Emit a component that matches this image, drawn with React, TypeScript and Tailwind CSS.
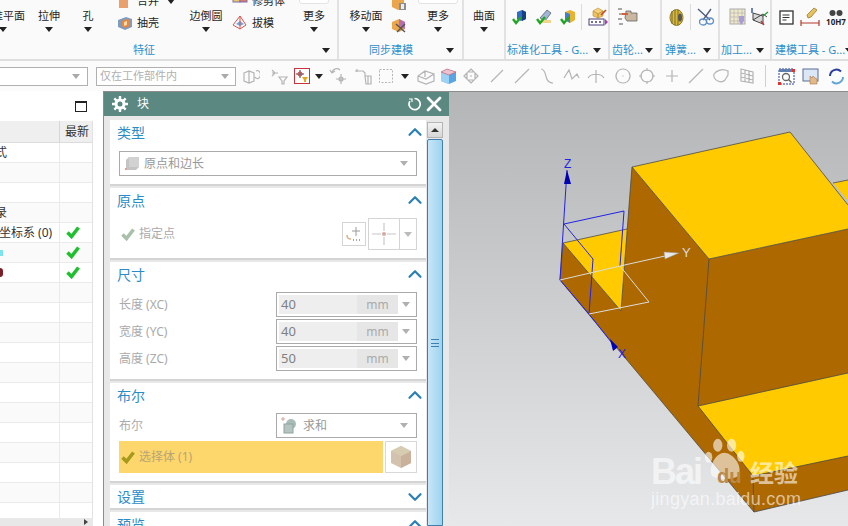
import type { ReactNode } from 'react';
import { ChevronDown, ChevronUp, X } from 'lucide-react';

const Arrow = ({ className = 'text-[#222]' }: { className?: string }) => (
  <svg width="8" height="5" viewBox="0 0 8 5" className={`shrink-0 ${className}`}>
    <path d="M0 0h8L4 5z" fill="currentColor" />
  </svg>
);

const Tick = ({ className }: { className: string }) => (
  <svg width="14" height="13" viewBox="0 0 14 13" fill="none" className={`shrink-0 ${className}`}>
    <path d="M1.5 6.5L5.5 10.5L12.5 1.5" stroke="currentColor" strokeWidth="3.6" />
  </svg>
);

// small colour icons, 16x16
const Ico = ({ children, size = 16, box = 16 }: { children: ReactNode; size?: number; box?: number }) => (
  <svg width={size} height={size} viewBox={`0 0 ${box} ${box}`} className="shrink-0">
    {children}
  </svg>
);

const Shell = () => (
  <Ico>
    <path d="M1 5l8-3 6 2v8l-7 3-7-3z" fill="#7f9bc0" />
    <path d="M5 6l5-2 3 1v6l-5 2-3-2z" fill="#e8873a" />
    <path d="M7 7l3-1v4l-3 1z" fill="#f6d9a8" />
  </Ico>
);
const Draft = () => (
  <Ico>
    <path d="M8 1l6 9-6 4-7-4z" fill="none" stroke="#d9534f" strokeWidth="1" />
    <path d="M4 9l4-3 4 3-4 2z" fill="#6fa8dc" />
    <path d="M8 1v13" stroke="#d9534f" />
  </Ico>
);
const Unite = () => (
  <Ico>
    <circle cx="6" cy="4" r="5" fill="#6aa9a0" stroke="#2f6f66" />
    <rect x="2" y="6" width="9" height="9" fill="#e9a06a" />
  </Ico>
);
const Trim = () => (
  <Ico>
    <rect x="1" y="0" width="7" height="9" fill="#e7c76a" stroke="#7d6fb0" />
    <rect x="8" y="0" width="7" height="9" fill="#d97a6a" stroke="#7d6fb0" />
  </Ico>
);
const SyncA = () => (
  <Ico>
    <path d="M1 4l6-3 6 3v8l-6 3-6-3z" fill="#eba54a" />
    <rect x="8" y="8" width="7" height="7" fill="#8d8d8d" />
    <path d="M10 9h3v5h-3z" fill="#ededed" />
  </Ico>
);
const SyncB = () => (
  <Ico>
    <path d="M1 5l7-3 6 3v7l-6 3-7-3z" fill="#eba54a" />
    <path d="M8 2l6 3v7l-6-3z" fill="#b56fb0" />
    <path d="M5 7l9 8M14 7l-8 8" stroke="#555" strokeWidth="1.4" />
  </Ico>
);
const StdA = ({ color = '#2d6fc4' }: { color?: string }) => (
  <Ico>
    <path d="M5 3l5-2 4 2v7l-5 2-4-2z" fill={color} />
    <path d="M10 1l4 2v7l-4 2z" fill="#173f86" />
    <path d="M1 10l3 4 5-6" fill="none" stroke="#25a525" strokeWidth="2.4" />
  </Ico>
);
const StdB = () => (
  <Ico>
    <path d="M4 9l7-8 4 3-6 8z" fill="#9fb7d8" stroke="#555" strokeWidth=".7" />
    <path d="M6 11h9v3H6z" fill="#f0d68a" />
    <path d="M1 10l3 4 5-6" fill="none" stroke="#25a525" strokeWidth="2.4" />
  </Ico>
);
const StdC = () => (
  <Ico>
    <path d="M5 3l5-2 5 2v8l-5 3-5-3z" fill="#e8b330" />
    <path d="M5 3l5 2v9l-5-3z" fill="#3d7fd0" />
    <path d="M1 10l3 4 5-6" fill="none" stroke="#25a525" strokeWidth="2.4" />
  </Ico>
);
const StdD = () => (
  <Ico size={20} box={20}>
    <path d="M5 4l5-3 5 3-5 3z" fill="#f3d27a" stroke="#b98a2a" strokeWidth=".6" />
    <path d="M5 4v5l5 2V7zM15 4v5l-5 2V7z" fill="#eec163" stroke="#b98a2a" strokeWidth=".6" />
    <rect x="1" y="12" width="15" height="6" fill="#fff" stroke="#4a3f7a" />
    <path d="M3 15h2M7 15h2M11 15h2" stroke="#4a3f7a" strokeWidth="1.5" />
    <path d="M17 12l3 3-3 3z" fill="#b03bb0" />
    <path d="M13 8l5-5" stroke="#c2452d" strokeWidth="1.6" />
  </Ico>
);
const Gear = () => (
  <Ico size={20} box={20}>
    <path d="M0 2h4M1 7h4M0 12h4M1 17h4" stroke="#555" strokeWidth="1" />
    <path d="M8 4h5v2h6v8H9l-2-3z" fill="#c9b7a0" stroke="#555" strokeWidth=".7" />
    <path d="M4 6h6v2H4z" fill="#d45f3b" />
  </Ico>
);
const Spring = () => (
  <svg width="15" height="17" viewBox="0 0 15 17" className="shrink-0">
    <ellipse cx="7.5" cy="8.5" rx="6.5" ry="8" fill="#d9b93a" stroke="#8a7a2a" />
    <path d="M3 2v13M6 1v15M9 1v15" stroke="#7b6a25" strokeWidth="1" />
    <ellipse cx="11" cy="8.5" rx="2" ry="4" fill="#555" />
  </svg>
);
const Scissor = () => (
  <Ico size={18} box={18}>
    <path d="M1 1l12 11M14 1L6 12" stroke="#4a5a78" strokeWidth="1.3" />
    <ellipse cx="13" cy="13" rx="3.5" ry="3" fill="none" stroke="#5f90c8" strokeWidth="1.3" />
    <ellipse cx="6" cy="14" rx="3.5" ry="3" fill="none" stroke="#5f90c8" strokeWidth="1.3" />
  </Ico>
);
const Table = () => (
  <Ico size={18} box={18}>
    <rect x="1" y="1" width="15" height="15" fill="#efe9c9" stroke="#a9a9a9" />
    <path d="M1 5h15M1 9h15M1 13h15M5 1v15M9 1v15M13 1v15" stroke="#b5b5b5" strokeWidth=".7" />
    <path d="M10 8h5v5l-3 4-2-4z" fill="#a99ad8" />
  </Ico>
);
const Datum = () => (
  <Ico size={20} box={20}>
    <path d="M4 6l10 3v8L4 13z" fill="#d8d8d8" stroke="#444" />
    <path d="M4 13l10-6 4 3" fill="none" stroke="#444" />
    <path d="M3 1v5" stroke="#2a4fb0" strokeWidth="1.4" />
    <path d="M14 9l5-4" stroke="#2a9a3a" strokeWidth="1.4" />
    <path d="M12 14l3 4" stroke="#c43a3a" strokeWidth="1.4" />
  </Ico>
);
const Note = () => (
  <Ico size={15} box={15}>
    <rect x="1" y="1" width="13" height="13" fill="#fff" stroke="#333" strokeWidth="1.3" />
    <path d="M3.5 5h7M3.5 7.5h7M3.5 10h4" stroke="#333" />
  </Ico>
);
const Brush = () => (
  <Ico size={20} box={20}>
    <path d="M7 8l7-7 3 2-6 7-3 1z" fill="#e7c15a" stroke="#8a6d2a" strokeWidth=".7" />
    <path d="M1 13v6M19 13v6M1 16h18" stroke="#b33a2a" strokeWidth="1.2" />
  </Ico>
);

const Col = ({ label, className, boxed }: { label: string; className: string; boxed?: boolean }) => (
  <div className={`relative flex flex-col items-center shrink-0 ${className}`}>
    {boxed ? <div className="absolute inset-x-[4px] -top-[6px] h-[10px] bg-white border border-[#e4e4e4] rounded-[3px]" /> : null}
    <span className="h-[17px] mt-[7px] whitespace-nowrap leading-[17px]">{label}</span>
    <div className="mt-[3px]">
      <Arrow />
    </div>
  </div>
);

const Stack = ({ rows, className }: { rows: [ReactNode, string, boolean?][]; className: string }) => (
  <div className={`flex flex-col shrink-0 -mt-[10px] ${className}`}>
    {rows.map(([icon, text, more], i) => (
      <div key={i} className="h-[22px] flex items-center gap-[4px]">
        {icon}
        <span className="whitespace-nowrap">{text}</span>
        {more ? <span className="ml-[4px]"><Arrow /></span> : null}
      </div>
    ))}
  </div>
);

const Group = ({ label, className, labelClass, children }: { label: string; className: string; labelClass: string; children: ReactNode }) => (
  <div className={`h-full shrink-0 flex flex-col ${className}`}>
    <div className="h-[43px] flex items-start">{children}</div>
    <div className={`h-[15px] flex items-center justify-between whitespace-nowrap text-[#2f8ec9] ${labelClass}`}>
      <span>{label}</span>
      {label ? <Arrow /> : null}
    </div>
  </div>
);

const Ribbon = () => (
  <div className="h-[59px] flex overflow-hidden bg-[#fafafa] text-[11px] text-[#1f1f1f]">
    <Group label="特征" className="w-[337px]" labelClass="pl-[133px] pr-[7px]">
      <Col label="基准平面" className="w-[48px] -ml-[21px]" />
      <Col label="拉伸" className="w-[44px]" />
      <Col label="孔" className="w-[34px]" />
      <Stack className="w-[75px] pl-[12px]" rows={[[<Unite />, '合并', true], [<Shell />, '抽壳']]} />
      <Col label="边倒圆" className="w-[52px]" />
      <Stack className="w-[63px]" rows={[[<Trim />, '修剪体'], [<Draft />, '拔模']]} />
      <Col label="更多" className="w-[38px]" boxed />
    </Group>
    <Group label="同步建模" className="w-[125px] border-l-2 border-[#e2e2e2]" labelClass="pl-[30px] pr-[8px]">
      <Col label="移动面" className="w-[50px] ml-[2px]" />
      <div className="w-[14px] shrink-0 flex flex-col -mt-[5px] gap-[6px]">
        <SyncA />
        <SyncB />
      </div>
      <Col label="更多" className="w-[48px] ml-[9px]" boxed />
    </Group>
    <Group label="" className="w-[42px] border-l-2 border-[#e2e2e2]" labelClass="">
      <Col label="曲面" className="w-[40px]" />
    </Group>
    <Group label="标准化工具 - G..." className="w-[104px] border-l-2 border-[#e2e2e2]" labelClass="pl-[1px] pr-[7px]">
      <div className="flex items-center h-[34px] pl-[6px] gap-[8px]">
        <StdA />
        <StdB />
        <StdC />
        <span className="w-px h-[26px] bg-[#dcdcdc] -ml-[3px] shrink-0" />
        <div className="-ml-[2px]">
          <StdD />
        </div>
      </div>
    </Group>
    <Group label="齿轮..." className="w-[52px] border-l-2 border-[#e2e2e2]" labelClass="pl-[2px] pr-[7px]">
      <div className="flex items-center h-[34px] pl-[8px]">
        <Gear />
      </div>
    </Group>
    <Group label="弹簧..." className="w-[58px] border-l-2 border-[#e2e2e2]" labelClass="pl-[3px] pr-[7px]">
      <div className="flex items-center h-[34px] pl-[7px] gap-[6px]">
        <Spring />
        <span className="w-px h-[26px] bg-[#dcdcdc]" />
        <Scissor />
      </div>
    </Group>
    <Group label="加工..." className="w-[52px] border-l-2 border-[#e2e2e2]" labelClass="pl-[1px] pr-[6px]">
      <div className="flex items-center h-[34px] pl-[9px] gap-[2px]">
        <Table />
        <Datum />
      </div>
    </Group>
    <Group label="建模工具 - G..." className="w-[78px] border-l-2 border-[#e2e2e2] overflow-hidden" labelClass="pl-[3px]">
      <div className="flex items-center h-[34px] pl-[7px] gap-[6px]">
        <Note />
        <Brush />
        <div className="flex flex-col items-center w-[20px] shrink-0">
          <svg width="14" height="8" viewBox="0 0 14 8"><circle cx="3.5" cy="4" r="3" fill="#444" /><circle cx="10.5" cy="4" r="3" fill="#444" /></svg>
          <span className="text-[8px] leading-[9px] font-bold whitespace-nowrap">10H7</span>
        </div>
      </div>
    </Group>
  </div>
);

const G = ({ d, w = 18 }: { d: string; w?: number }) => (
  <svg width={w} height="18" viewBox="0 0 18 18" fill="none" stroke="#b4b4b4" strokeWidth="1.2" className="shrink-0">
    <path d={d} />
  </svg>
);

const Slot = ({ className, children }: { className: string; children: ReactNode }) => (
  <div className={`flex items-center justify-center shrink-0 ${className}`}>{children}</div>
);

const SelectBar = () => (
  <div className="h-[32px] flex items-center bg-[#fbfbfb] border-t-2 border-[#dedede] overflow-hidden">
    <div className="w-[89px] h-[19px] -ml-px border border-[#b0b0b0] bg-white flex items-center justify-end pr-[7px] shrink-0">
      <Arrow className="text-[#aaa]" />
    </div>
    <div className="w-[140px] h-[19px] ml-[8px] border border-[#b0b0b0] bg-white flex items-center justify-between pl-[3px] pr-[6px] shrink-0">
      <span className="text-[11px] text-[#b0b0b0] whitespace-nowrap">仅在工作部件内</span>
      <Arrow className="text-[#aaa]" />
    </div>
    <Slot className="w-[28px] ml-[1px]"><G d="M2 6l5-2 5 2v8l-5 2-5-2zM7 4v12M14 4a3 4 0 1 1-1 6" /></Slot>
    <Slot className="w-[28px]"><G d="M2 6h6M2 3l3 3-3 3M9 10h8l-3 4v3h-2v-3z" /></Slot>
    <Slot className="w-[18px]">
      <div className="w-[16px] h-[16px] border border-[#c8323c] bg-white flex items-center justify-center">
        <svg width="14" height="14" viewBox="0 0 14 14">
          <path d="M5 1v8M1 5h8" stroke="#444" strokeWidth="1" />
          <circle cx="5" cy="5" r="2" fill="none" stroke="#c8323c" />
          <path d="M7 8h6l-2 3v2H9v-2z" fill="#e3a81e" />
        </svg>
      </div>
    </Slot>
    <Slot className="w-[16px]"><Arrow /></Slot>
    <Slot className="w-[22px]"><G d="M3 5a5 5 0 0 1 8-2M1 3l2 3 3-2M12 7v10M7 12h10M10 12a2 2 0 0 0 4 0 2 2 0 0 0-4 0" /></Slot>
    <Slot className="w-[27px]"><G d="M1 4h8l2 2v3M3 2v3M11 9h6v8h-5zM14 9v8" /></Slot>
    <Slot className="w-[20px]">
      <svg width="16" height="16" viewBox="0 0 16 16" fill="none" stroke="#b4b4b4" strokeDasharray="2 1.5" className="shrink-0">
        <path d="M1.5 1.5h13v13h-13z" />
      </svg>
    </Slot>
    <Slot className="w-[18px]"><Arrow /></Slot>
    <Slot className="w-[24px]"><G d="M1 9l7-5 9 3v7l-8 3-8-3zM8 4v6M1 9l8 3 8-5" /></Slot>
    <Slot className="w-[20px]">
      <svg width="17" height="17" viewBox="0 0 17 17" className="shrink-0">
        <path d="M1 4l6-3 9 3v9l-7 3-8-3z" fill="#58a4e4" />
        <path d="M1 4l8 3v9l-8-3z" fill="#9ed2f4" />
        <path d="M1 4l6-3 9 3-7 3z" fill="#e8c4ce" stroke="#d6556a" strokeWidth=".6" />
      </svg>
    </Slot>
    <Slot className="w-[26px]"><G d="M9 2l3 3H6zM9 16l3-3H6zM2 9l3-3v6zM16 9l-3-3v6zM8 9h2" /></Slot>
    <Slot className="w-[25px]"><G d="M3 15L15 3M9 9h.1" /></Slot>
    <Slot className="w-[25px]"><G d="M2 16L16 2M8 10l2-2" /></Slot>
    <Slot className="w-[25px]"><G d="M3 2c7 0 2 14 12 14" /></Slot>
    <Slot className="w-[24px]"><G d="M2 11l5-8 3 9 5-5 2 4M7 3v.1M2 11v.1M10 12v.1" /></Slot>
    <Slot className="w-[26px]"><G d="M1 11c3-5 13-5 16 0M9 3v13M9 6v.1" /></Slot>
    <Slot className="w-[27px]"><G d="M9 2a7 7 0 1 0 .01 0M9 8.5v1" /></Slot>
    <Slot className="w-[22px]"><G d="M9 3a6 6 0 1 0 .01 0M9 1v3M9 14v3M1 9h3M14 9h3" /></Slot>
    <Slot className="w-[28px]"><G d="M9 3v12M3 9h12" /></Slot>
    <Slot className="w-[20px]"><G d="M2 16L16 2M7 11l3-3" /></Slot>
    <Slot className="w-[30px]"><G d="M2 7c3-4 9-5 11-4l3 1v4l-3 5c-2 2-5 2-7 1C3 13 1 10 2 7z" /></Slot>
    <Slot className="w-[22px]"><G d="M3 2l12 3v11L3 14zM7 3v12M11 4v12M3 6l12 3M3 10l12 3" /></Slot>
    <div className="w-px h-[22px] bg-[#cfcfcf] ml-[7px] mr-[10px] shrink-0" />
    <Slot className="w-[20px]">
      <svg width="17" height="17" viewBox="0 0 17 17" className="shrink-0">
        <rect x="1" y="1" width="15" height="15" fill="#fff" stroke="#2a3fa8" strokeDasharray="2 1" />
        <rect x="1" y="1" width="15" height="3" fill="#5f7fae" />
        <circle cx="8" cy="9" r="3.5" fill="none" stroke="#666" strokeWidth="1.3" />
        <path d="M10.5 11.5l3 3" stroke="#666" strokeWidth="1.4" />
        <rect x="0" y="14" width="3" height="3" fill="#d33" />
        <rect x="14" y="1" width="3" height="3" fill="#d33" />
      </svg>
    </Slot>
    <Slot className="w-[30px]">
      <svg width="18" height="17" viewBox="0 0 18 17" className="shrink-0">
        <rect x="1" y="1" width="15" height="12" fill="#dbe7f6" stroke="#5a6f96" />
        <path d="M8 16V8l2 2 1-2 2 2 2 1v5z" fill="#e2b98a" stroke="#a37b4d" strokeWidth=".6" />
      </svg>
    </Slot>
    <Slot className="w-[20px]">
      <svg width="17" height="17" viewBox="0 0 17 17" fill="none" className="shrink-0">
        <path d="M2 8a6.5 6.5 0 0 1 11-4.5" stroke="#2a3f9a" strokeWidth="2" />
        <path d="M15 9a6.5 6.5 0 0 1-11 4.5" stroke="#5fa6d6" strokeWidth="2" />
      </svg>
    </Slot>
  </div>
);

const navRows = [
  { text: '模式', ml: '-ml-[17px]' },
  { text: '', ml: '' },
  { text: '', ml: '' },
  { text: '历史记录', ml: '-ml-[41px]' },
  { text: '基准坐标系 (0)', ml: '-ml-[25px]', ok: true },
  { text: '', ml: '', ok: true },
  { text: '', ml: '', ok: true },
];

const NavPanel = () => (
  <div className="w-[103px] shrink-0 h-full bg-white flex flex-col overflow-hidden text-[12px] text-[#333]">
    <div className="h-[30px] flex items-center justify-end pr-[16px] shrink-0">
      <div className="w-[12px] h-[11px] border border-[#222] border-t-2" />
    </div>
    <div className="w-[93px] flex-1 border-r border-[#e2e2e2] overflow-hidden flex flex-col">
      <div className="h-[22px] shrink-0 flex bg-[#efefef] border-b border-[#dcdcdc]">
        <div className="w-[60px] border-r border-[#d6d6d6]" />
        <div className="flex-1 flex items-center justify-center pl-[2px]">最新</div>
      </div>
      {Array.from({ length: 19 }).map((_, i) => {
        const r = navRows[i];
        return (
          <div key={i} className={`h-[20px] shrink-0 flex border-b border-[#eaeaea] ${i % 2 ? 'bg-[#fafafa]' : 'bg-white'}`}>
            <div className="w-[60px] border-r border-[#eaeaea] overflow-hidden flex items-center">
              {r?.text ? <span className={`whitespace-nowrap ${r.ml}`}>{r.text}</span> : null}
              {i === 5 ? <span className="w-[3px] h-[6px] bg-[#7fe3ee]" /> : null}
              {i === 6 ? <span className="w-[3px] h-[9px] rounded-r-full bg-[#7a1f2a]" /> : null}
            </div>
            <div className="flex-1 flex items-center pl-[6px]">
              {r?.ok ? <Tick className="text-[#1fbf2f]" /> : null}
            </div>
          </div>
        );
      })}
    </div>
    <div className="h-[8px] w-[93px] shrink-0 bg-[#e8e8e8] flex items-center justify-end pr-[5px]">
      <span className="w-0 h-0 border-y-[3px] border-y-transparent border-l-[4px] border-l-[#444]" />
    </div>
  </div>
);

const Section = ({ title, open = true, children, className = '' }: { title: string; open?: boolean; children?: ReactNode; className?: string }) => (
  <section className={`bg-white border-b-2 border-[#d4d4d4] shrink-0 ${className}`}>
    <div className="h-[24px] flex items-center justify-between pl-[7px] text-[14px] text-[#2b8cc6]">
      <span>{title}</span>
      {open ? <ChevronUp size={22} strokeWidth={2.4} className="text-[#2a7fb4]" /> : <ChevronDown size={22} strokeWidth={2.4} className="text-[#2a7fb4]" />}
    </div>
    {children}
  </section>
);

const Num = ({ label, value }: { label: string; value: string }) => (
  <div className="flex items-center justify-between h-[25px]">
    <span className="text-[12px] text-[#aaa]">{label}</span>
    <div className="w-[141px] h-[25px] border border-[#aaa] p-[2px] flex items-stretch">
      <div className="w-[78px] bg-[#eeeeee] pl-[2px] text-[13px] leading-[18px] text-[#808080]">{value}</div>
      <div className="w-[41px] bg-[#e6e6e6] flex items-center justify-center text-[12px] text-[#aaa]">mm</div>
      <div className="flex-1 flex items-center justify-center">
        <Arrow className="text-[#b0b0b0]" />
      </div>
    </div>
  </div>
);

const Dialog = () => (
  <div className="w-[346px] h-full shrink-0 flex flex-col border-l border-t border-[#8c8c8c] bg-[#e8e8e8]">
    <div className="h-[24px] shrink-0 bg-[#5b8880] flex items-center pl-[8px] pr-[3px] text-white">
      <svg width="16" height="16" viewBox="0 0 16 16" fill="none" stroke="white" className="shrink-0">
        <circle cx="8" cy="8" r="4" strokeWidth="3" />
        <path d="M8 0v3M8 13v3M0 8h3M13 8h3M2.3 2.3l2 2M11.7 11.7l2 2M2.3 13.7l2-2M11.7 4.3l2-2" strokeWidth="2.4" />
      </svg>
      <span className="ml-[9px] text-[12px]">块</span>
      <svg width="14" height="14" viewBox="0 0 14 14" fill="none" stroke="white" strokeWidth="1.7" className="ml-auto shrink-0">
        <path d="M6.5 1.5a5.6 5.6 0 1 1-4.6 2.6" />
        <path d="M1 2h3v3" strokeWidth="1.2" />
      </svg>
      <X size={24} strokeWidth={2.8} className="shrink-0" />
    </div>
    <div className="flex-1 min-h-0 flex pl-[6px] pt-[4px] overflow-hidden">
      <div className="w-[316px] shrink-0 flex flex-col gap-[2px]">
        <Section title="类型">
          <div className="px-[9px] pt-[7px] pb-[8px]">
            <div className="h-[25px] border border-[#aaa] flex items-center pl-[5px] pr-[8px] text-[12px] text-[#999]">
              <svg width="15" height="15" viewBox="0 0 15 15" className="shrink-0">
                <path d="M1 4l3-3h10v10l-3 3H1z" fill="#c4c4c4" />
                <path d="M4 1h10v10H4z" fill="#d2d2d2" />
                <rect x="0" y="12" width="2" height="2" fill="#d8a59a" />
              </svg>
              <span className="ml-[4px]">原点和边长</span>
              <span className="ml-auto"><Arrow className="text-[#b0b0b0]" /></span>
            </div>
          </div>
        </Section>
        <Section title="原点">
          <div className="pl-[11px] pr-[9px] pt-[6px] pb-[8px] flex items-center">
            <Tick className="text-[#a9c0aa]" />
            <span className="ml-[4px] text-[12px] text-[#aaa]">指定点</span>
            <div className="ml-auto w-[24px] h-[24px] border border-[#d4d4d4] flex items-center justify-center">
              <svg width="18" height="18" viewBox="0 0 18 18" fill="none">
                <path d="M11 2v9M7 6h8" stroke="#999" />
                <path d="M2 10c0 3 2 4 4 4" stroke="#d8b48c" strokeWidth="1.5" />
                <path d="M8 15h1M11 15h1M14 15h1" stroke="#888" strokeWidth="1.5" />
              </svg>
            </div>
            <div className="ml-[2px] w-[49px] h-[32px] border border-[#d4d4d4] flex items-center">
              <div className="w-[31px] h-full border-r border-[#d4d4d4] flex items-center justify-center">
                <svg width="26" height="24" viewBox="0 0 26 24" fill="none">
                  <path d="M1 12h9M16 12h9M13 1v8M13 15v8" stroke="#c8c8c8" strokeWidth="1.2" />
                  <circle cx="13" cy="12" r="2" fill="#d9a9a0" />
                </svg>
              </div>
              <div className="flex-1 flex justify-center"><Arrow className="text-[#bbb]" /></div>
            </div>
          </div>
        </Section>
        <Section title="尺寸">
          <div className="px-[9px] pt-[6px] pb-[8px] flex flex-col gap-[2px]">
            <Num label="长度 (XC)" value="40" />
            <Num label="宽度 (YC)" value="40" />
            <Num label="高度 (ZC)" value="50" />
          </div>
        </Section>
        <Section title="布尔">
          <div className="px-[9px] pt-[6px] pb-[8px] flex flex-col gap-[3px]">
            <div className="flex items-center justify-between">
              <span className="text-[12px] text-[#aaa]">布尔</span>
              <div className="w-[141px] h-[25px] border border-[#aaa] flex items-center pl-[4px] pr-[8px] text-[12px] text-[#999]">
                <svg width="17" height="17" viewBox="0 0 17 17" className="shrink-0">
                  <path d="M0 2h4M2 0v4" stroke="#d8a59a" />
                  <circle cx="10" cy="7" r="5" fill="#a9bcb8" />
                  <rect x="3" y="7" width="9" height="9" fill="#b5c4c1" stroke="#8fa3a0" />
                </svg>
                <span className="ml-[5px]">求和</span>
                <span className="ml-auto"><Arrow className="text-[#b0b0b0]" /></span>
              </div>
            </div>
            <div className="flex gap-[2px] h-[32px]">
              <div className="w-[264px] bg-[#fdd66c] flex items-center pl-[2px]">
                <Tick className="text-[#a59a1c]" />
                <span className="ml-[4px] text-[12px] text-[#b8a574]">选择体 (1)</span>
              </div>
              <div className="flex-1 border border-[#d8d8d8] flex items-center justify-center">
                <svg width="22" height="24" viewBox="0 0 22 24">
                  <path d="M11 1l10 5v12l-10 5-10-5V6z" fill="#d3c2ad" />
                  <path d="M11 11l10-5v12l-10 5z" fill="#c9b19c" />
                  <path d="M11 1l10 5-10 5L1 6z" fill="#d7cbb2" />
                </svg>
              </div>
            </div>
          </div>
        </Section>
        <Section title="设置" open={false} className="[&>div]:h-[23px]" />
        <Section title="预览" />
      </div>
      <div className="w-[16px] ml-[1px] mt-[2px] shrink-0 flex flex-col">
        <div className="h-[16px] border border-[#b5b5b5] bg-gradient-to-b from-[#f2f2f2] to-[#d6d6d6] flex items-center justify-center">
          <span className="w-0 h-0 border-x-[4px] border-x-transparent border-b-[4px] border-b-[#333]" />
        </div>
        <div className="flex-1 mt-px border border-[#3f7fae] rounded-t-[2px] bg-gradient-to-r from-[#c7e6f8] to-[#9fd3f0] flex flex-col items-center pt-[199px]">
          <div className="w-[8px] h-[8px] border-y border-[#3f7fae] flex flex-col justify-center">
            <div className="h-px bg-[#3f7fae]" />
          </div>
        </div>
      </div>
    </div>
  </div>
);

const Viewport = () => (
  <div className="flex-1 h-full relative overflow-hidden bg-gradient-to-b from-[#b3b5b7] to-[#e6e8ea] border-t border-[#8c8c8c]">
    <svg width="399" height="434" viewBox="449 92 399 434" className="block">
      {/* solid */}
      <path d="M563 243L621 311L632 167L709 259L848 229V490L754 512L560 280Z" fill="#ad6800" />
      <path d="M632 167L790 132L848 205V229L709 259Z" fill="#ffcb00" />
      <path d="M833 183L848 180V201Z" fill="#ffcb00" />
      <path d="M563 243L627 229L621 311Z" fill="#ffcb00" />
      <path d="M698 406L848 373V456L753 476Z" fill="#ffcb00" />
      <g fill="none" stroke="#4a4a4a" strokeWidth=".8">
        <path d="M632 167L790 132L848 205M632 167L709 259L848 229M709 259L698 406L848 373M632 167L621 311L563 243M563 243L627 229M563 243L560 280L754 512L848 490M698 406L753 476L848 456M753 476L754 512M833 183L848 180" />
      </g>
      {/* csys */}
      <g fill="none" stroke="#2222e6" strokeWidth="1">
        <path d="M560 280L567 170M564 224L624 211L620 266M564 224L593 259L589 314M560 280L589 314L615 347" />
      </g>
      <g fill="none" stroke="#dcdcdc" strokeWidth="1">
        <path d="M560 280L620 266L665 256M620 266L649 302L589 314" />
      </g>
      <path d="M567 170L571 184H564Z" fill="#0000b4" />
      <path d="M610 339L618 347L613 351Z" fill="#0000b4" />
      <path d="M679 253L664 252L665 259Z" fill="#e8e8e8" stroke="#999" strokeWidth=".5" />
      <text x="564" y="168" fontSize="12" fill="#2222e6" fontFamily="Liberation Sans">Z</text>
      <text x="682" y="257" fontSize="13" fill="#dcdcdc" fontFamily="Liberation Sans">Y</text>
      <text x="618" y="358" fontSize="12" fill="#2222e6" fontFamily="Liberation Sans">X</text>
    </svg>
    {/* watermark */}
    <div className="absolute left-[202px] top-[361px] text-white/60 [font-family:'Liberation_Sans',sans-serif] select-none">
      <div className="flex items-end h-[38px]">
        <span className="text-[36px] leading-[38px] font-bold tracking-[-2px]">Bai</span>
        <span className="relative w-[46px] h-[38px] ml-[3px]">
          <svg width="46" height="46" viewBox="0 0 46 50" className="absolute left-0 -top-[16px]">
            <g fill="currentColor">
              <ellipse cx="13" cy="9" rx="5" ry="7" />
              <ellipse cx="28" cy="9" rx="5" ry="7" />
              <ellipse cx="3" cy="22" rx="4" ry="6" />
              <ellipse cx="38" cy="21" rx="4" ry="6" />
              <path d="M20 17c8 0 20 12 16 24-2 6-28 6-30 0-3-11 6-24 14-24z" />
            </g>
          </svg>
          <span className="absolute left-[13px] top-[11px] text-[20px] leading-[24px] font-bold text-[#b98a4a]">du</span>
        </span>
        <span className="self-start mt-[2px] text-[24px] leading-[34px] font-bold [font-family:'Noto_Sans_CJK_SC',sans-serif]">经验</span>
      </div>
      <div className="text-[18px] leading-[20px] -mt-[2px] tracking-[0.3px] whitespace-nowrap">jingyan.baidu.com</div>
    </div>
  </div>
);

export default function App() {
  return (
    <div className="w-[848px] h-[526px] overflow-hidden flex flex-col bg-white [font-family:'Noto_Sans','Noto_Sans_CJK_SC',sans-serif]">
      <Ribbon />
      <SelectBar />
      <div className="flex-1 min-h-0 flex">
        <NavPanel />
        <Dialog />
        <Viewport />
      </div>
    </div>
  );
}
